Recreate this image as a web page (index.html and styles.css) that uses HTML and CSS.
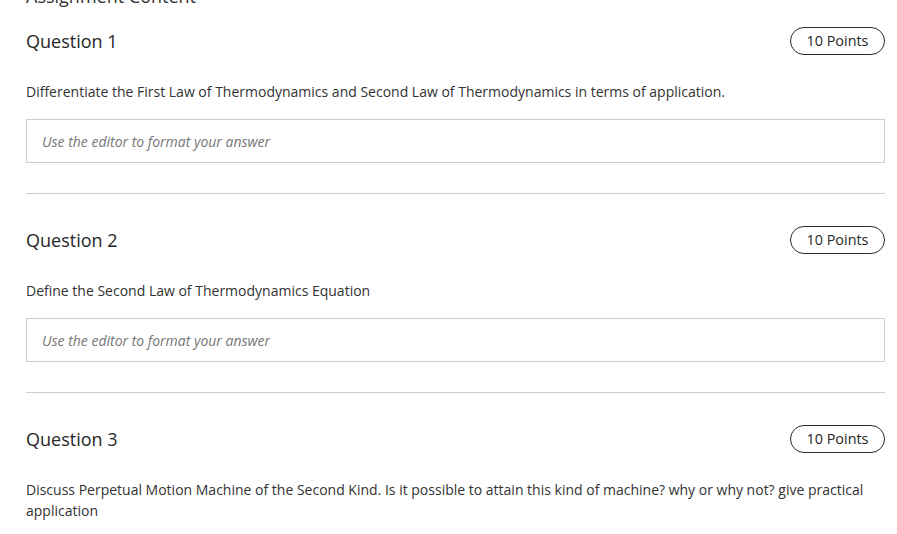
FILE: index.html
```html
<!DOCTYPE html>
<html>
<head>
<meta charset="utf-8">
<link rel="stylesheet" href="styles.css">
</head>
<body>
<div class="page">
  <h1 class="title">Assignment Content</h1>

  <section class="question">
    <div class="q-head">
      <h2 class="q-title">Question 1</h2>
      <span class="points">10 Points</span>
    </div>
    <p class="q-text">Differentiate the First Law of Thermodynamics and Second Law of Thermodynamics in terms of application.</p>
    <div class="answer">Use the editor to format your answer</div>
  </section>

  <section class="question">
    <div class="q-head">
      <h2 class="q-title">Question 2</h2>
      <span class="points">10 Points</span>
    </div>
    <p class="q-text">Define the Second Law of Thermodynamics Equation</p>
    <div class="answer">Use the editor to format your answer</div>
  </section>

  <section class="question last">
    <div class="q-head">
      <h2 class="q-title">Question 3</h2>
      <span class="points">10 Points</span>
    </div>
    <p class="q-text">Discuss Perpetual Motion Machine of the Second Kind. Is it possible to attain this kind of machine? why or why not? give practical application</p>
  </section>
</div>
</body>
</html>
```

FILE: styles.css
```css
html, body {
  margin: 0;
  padding: 0;
  background: #ffffff;
}
body {
  font-family: "Open Sans", "Noto Sans", sans-serif;
  color: #333333;
  overflow: hidden;
}
.page {
  padding: 0 12px 0 26px;
}
.title {
  margin: -16px 0 0 0;
  font-size: 18px;
  line-height: 24px;
  font-weight: 400;
  color: #333;
}
.question {
  padding-top: 19px;
}
.question + .question {
  border-top: 1px solid #cdcdcd;
  margin-top: 30px;
  padding-top: 32px;
}
.q-head {
  display: flex;
  align-items: center;
  justify-content: space-between;
  height: 28px;
}
.q-title {
  margin: 0;
  font-size: 18px;
  font-weight: 400;
  line-height: 28px;
  color: #262626;
}
.points {
  box-sizing: border-box;
  height: 28px;
  padding: 0 12px;
  border: 1px solid #2b2b2b;
  border-radius: 14px;
  font-size: 14.4px;
  line-height: 26px;
  color: #262626;
  width: 95px;
  text-align: center;
}
.q-text {
  margin: 26px 0 0 0;
  font-size: 14px;
  line-height: 21px;
  color: #333;
}
.answer {
  box-sizing: border-box;
  margin-top: 17px;
  height: 44px;
  border: 1px solid #cdcdcd;
  padding: 0 15px;
  display: flex;
  align-items: center;
  font-size: 14px;
  font-style: italic;
  color: #767676;
}
```
